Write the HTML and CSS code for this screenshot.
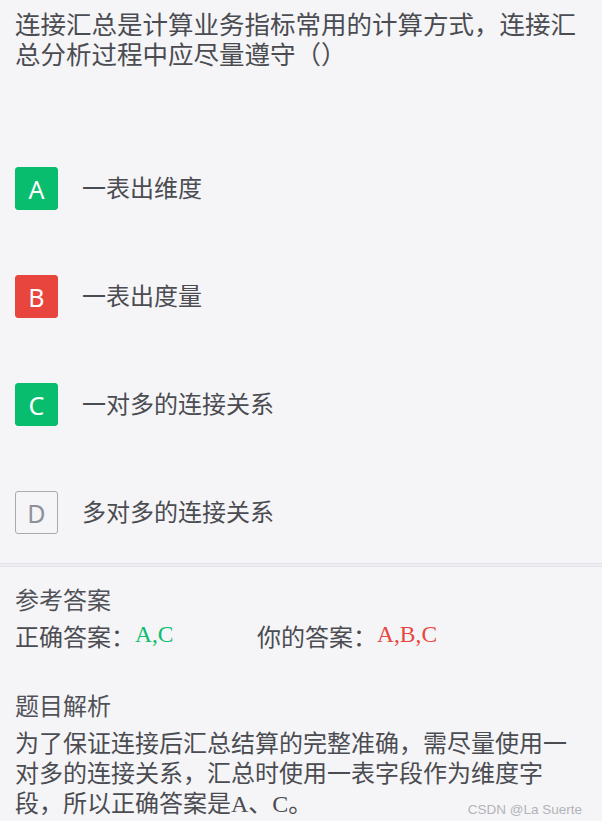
FILE: index.html
```html
<!DOCTYPE html>
<html lang="zh">
<head>
    <meta charset="UTF-8">
    <meta name="viewport" content="width=device-width, initial-scale=1.0">
    <title>题目详情</title>
    <link rel="stylesheet" href="styles.css">
</head>
<body>
    <div class="question">
        <p class="question-title">连接汇总是计算业务指标常用的计算方式，连接汇总分析过程中应尽量遵守（）</p>

        <div class="options">
            <div class="option">
                <span class="badge right">A</span>
                <span class="option-text">一表出维度</span>
            </div>
            <div class="option">
                <span class="badge wrong">B</span>
                <span class="option-text">一表出度量</span>
            </div>
            <div class="option">
                <span class="badge right">C</span>
                <span class="option-text">一对多的连接关系</span>
            </div>
            <div class="option">
                <span class="badge">D</span>
                <span class="option-text">多对多的连接关系</span>
            </div>
        </div>
    </div>

    <div class="divider"></div>

    <div class="answer">
        <p class="section-title">参考答案</p>
        <div class="answer-row">
            <div class="answer-item">正确答案：<span class="answer-value right-text">A,C</span></div>
            <div class="answer-item">你的答案：<span class="answer-value wrong-text">A,B,C</span></div>
        </div>

        <p class="section-title analysis-title">题目解析</p>
        <p class="analysis">为了保证连接后汇总结算的完整准确，需尽量使用一对多的连接关系，汇总时使用一表字段作为维度字段，所以正确答案是<span class="serif">A</span>、<span class="serif">C</span>。</p>
    </div>

    <div class="watermark">CSDN @La Suerte</div>
</body>
</html>
```

FILE: styles.css
```css
html {
    background: #f5f5f7;
}
body {
    margin: 0;
    font-family: "Noto Sans CJK SC", "Noto Sans", sans-serif;
    color: #4b4c52;
    background: #f5f5f7;
    min-height: 821px;
    position: relative;
}
p {
    margin: 0;
}
.question {
    padding: 8px 15px 0;
}
.question-title {
    font-size: 25.5px;
    line-height: 30px;
}
.options {
    margin-top: 99px;
    display: flex;
    flex-direction: column;
    gap: 65px;
}
.option {
    display: flex;
    align-items: center;
    gap: 24px;
    height: 43px;
}
.badge {
    width: 43px;
    height: 43px;
    box-sizing: border-box;
    border: 1px solid #a9aab1;
    border-radius: 3px;
    display: flex;
    align-items: center;
    justify-content: center;
    font-family: "Noto Sans", sans-serif;
    font-size: 25px;
    color: #8e9099;
}
.badge.right {
    background: #08bd6d;
    border-color: #08bd6d;
    color: white;
}
.badge.wrong {
    background: #e8453e;
    border-color: #e8453e;
    color: white;
}
.option-text {
    font-size: 24px;
    line-height: 30px;
    margin-top: -3px;
}
.divider {
    margin-top: 29px;
    height: 2px;
    border-top: 1px solid #e3e3e9;
    border-bottom: 1px solid #e3e3e9;
    background: #eeeef2;
}
.answer {
    padding: 17px 15px 0;
}
.section-title {
    font-size: 24px;
    line-height: 30px;
    color: #515258;
}
.answer-row {
    display: flex;
    margin-top: 7px;
    font-size: 24px;
    line-height: 30px;
}
.answer-item {
    width: 242px;
}
.answer-value {
    font-family: "Liberation Serif", serif;
    font-size: 23.5px;
    position: relative;
    top: -4px;
}
.right-text {
    color: #0bbd6f;
}
.wrong-text {
    color: #e8453e;
}
.analysis-title {
    margin-top: 37px;
}
.analysis {
    margin-top: 7px;
    font-size: 24px;
    line-height: 30px;
    padding-right: 5px;
}
.serif {
    font-family: "Liberation Serif", serif;
}
.watermark {
    position: absolute;
    right: 20px;
    bottom: 4px;
    font-family: "Liberation Sans", Arial, sans-serif;
    font-size: 13.5px;
    color: #b3b3b7;
}
```
